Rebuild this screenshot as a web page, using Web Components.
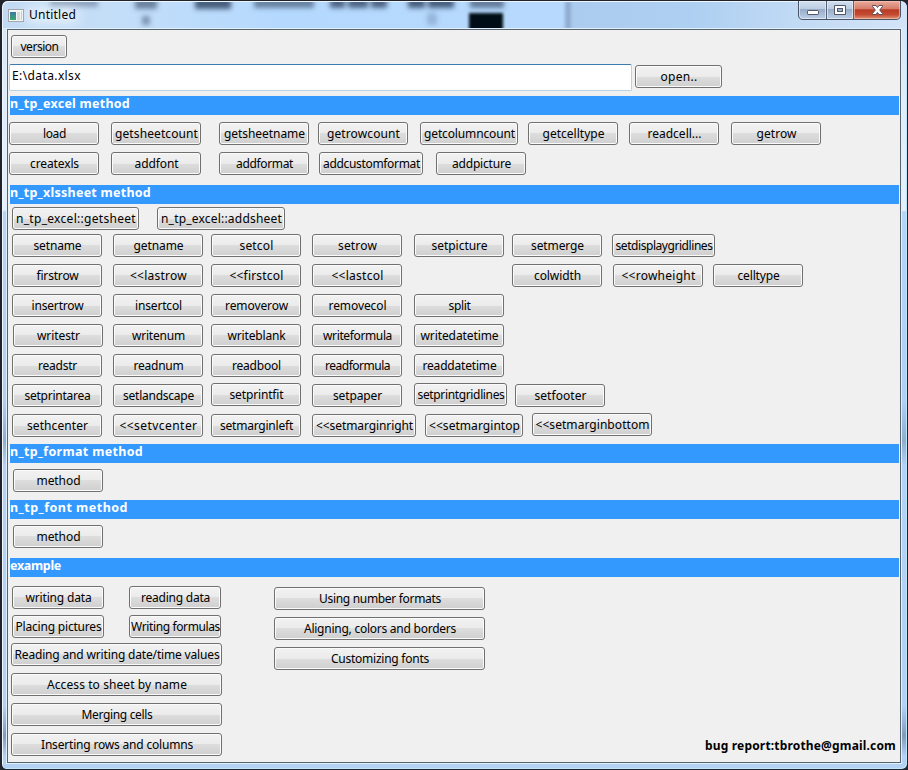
<!DOCTYPE html>
<html lang="en">
<head>
<meta charset="utf-8">
<title>Untitled</title>
<style>
    html, body { margin:0; height:100%; overflow:hidden; background:#23252d; }
    body { font:12px/15px "Noto Sans", "Open Sans", sans-serif; color:#000; }
</style>
</head>
<body>
<app-window>
    <title-bar slot="title" fit="47">Untitled</title-bar>

    <button-row top="5"><tp-button gap="3" w="56" fit="38">version</tp-button></button-row>
    <button-row top="6">
        <path-field fit="69">E:\data.xlsx</path-field>
        <tp-button gap="3" down="1" w="87" fit="37">open..</tp-button>
    </button-row>

    <section-bar top="5" fit="120">n_tp_excel method</section-bar>
    <button-row top="7">
        <tp-button gap="1" fit="23">load</tp-button>
        <tp-button gap="12" fit="83">getsheetcount</tp-button>
        <tp-button gap="18" fit="81">getsheetname</tp-button>
        <tp-button gap="9" fit="73">getrowcount</tp-button>
        <tp-button gap="12" w="98" fit="91">getcolumncount</tp-button>
        <tp-button gap="10" fit="62">getcelltype</tp-button>
        <tp-button gap="11" fit="54">readcell...</tp-button>
        <tp-button gap="12" fit="40">getrow</tp-button>
    </button-row>
    <button-row top="7">
        <tp-button gap="1" fit="49">createxls</tp-button>
        <tp-button gap="12" fit="44">addfont</tp-button>
        <tp-button gap="18" fit="57">addformat</tp-button>
        <tp-button gap="10" w="104" fit="97">addcustomformat</tp-button>
        <tp-button gap="13" fit="59">addpicture</tp-button>
    </button-row>

    <section-bar top="10" fit="141">n_tp_xlssheet method</section-bar>
    <button-row top="3">
        <tp-button gap="4" w="127" fit="120">n_tp_excel::getsheet</tp-button>
        <tp-button gap="18" w="128" fit="121">n_tp_excel::addsheet</tp-button>
    </button-row>
    <button-row top="4">
        <tp-button gap="4" fit="48">setname</tp-button>
        <tp-button gap="11" fit="50">getname</tp-button>
        <tp-button gap="8" fit="34">setcol</tp-button>
        <tp-button gap="11" fit="39">setrow</tp-button>
        <tp-button gap="12" fit="56">setpicture</tp-button>
        <tp-button gap="8" fit="53">setmerge</tp-button>
        <tp-button gap="10" w="103" fit="97">setdisplaygridlines</tp-button>
    </button-row>
    <button-row top="7">
        <tp-button gap="4" fit="42">firstrow</tp-button>
        <tp-button gap="11" fit="57">&lt;&lt;lastrow</tp-button>
        <tp-button gap="8" fit="54">&lt;&lt;firstcol</tp-button>
        <tp-button gap="11" fit="52">&lt;&lt;lastcol</tp-button>
        <tp-button gap="110" fit="47">colwidth</tp-button>
        <tp-button gap="11" fit="74">&lt;&lt;rowheight</tp-button>
        <tp-button gap="10" fit="42">celltype</tp-button>
    </button-row>
    <button-row top="7">
        <tp-button gap="4" fit="52">insertrow</tp-button>
        <tp-button gap="11" fit="47">insertcol</tp-button>
        <tp-button gap="8" fit="63">removerow</tp-button>
        <tp-button gap="11" fit="58">removecol</tp-button>
        <tp-button gap="12" fit="22">split</tp-button>
    </button-row>
    <button-row top="7">
        <tp-button gap="5" fit="43">writestr</tp-button>
        <tp-button gap="10" fit="53">writenum</tp-button>
        <tp-button gap="8" fit="58">writeblank</tp-button>
        <tp-button gap="11" fit="69">writeformula</tp-button>
        <tp-button gap="12" fit="78">writedatetime</tp-button>
    </button-row>
    <button-row top="7">
        <tp-button gap="4" fit="39">readstr</tp-button>
        <tp-button gap="11" fit="50">readnum</tp-button>
        <tp-button gap="8" fit="49">readbool</tp-button>
        <tp-button gap="11" fit="65">readformula</tp-button>
        <tp-button gap="12" fit="74">readdatetime</tp-button>
    </button-row>
    <button-row top="7">
        <tp-button gap="4" fit="66">setprintarea</tp-button>
        <tp-button gap="11" fit="71">setlandscape</tp-button>
        <tp-button gap="8" down="-1" fit="54">setprintfit</tp-button>
        <tp-button gap="11" fit="49">setpaper</tp-button>
        <tp-button gap="12" down="-1" w="93" fit="87">setprintgridlines</tp-button>
        <tp-button gap="8" fit="52">setfooter</tp-button>
    </button-row>
    <button-row top="7">
        <tp-button gap="4" fit="61">sethcenter</tp-button>
        <tp-button gap="11" fit="78">&lt;&lt;setvcenter</tp-button>
        <tp-button gap="8" fit="73">setmarginleft</tp-button>
        <tp-button gap="11" w="104" fit="97">&lt;&lt;setmarginright</tp-button>
        <tp-button gap="9" w="98" fit="91">&lt;&lt;setmargintop</tp-button>
        <tp-button gap="9" down="-1" w="120" fit="114">&lt;&lt;setmarginbottom</tp-button>
    </button-row>

    <section-bar top="7" fit="133">n_tp_format method</section-bar>
    <button-row top="6"><tp-button gap="5" fit="44">method</tp-button></button-row>

    <section-bar top="8" fit="118">n_tp_font method</section-bar>
    <button-row top="6"><tp-button gap="5" fit="44">method</tp-button></button-row>

    <section-bar top="10" fit="51">example</section-bar>
    <example-panel>
        <button-row>
            <tp-button gap="4" w="92" fit="66">writing data</tp-button>
            <tp-button gap="25" w="92" fit="69">reading data</tp-button>
        </button-row>
        <button-row top="6">
            <tp-button gap="4" w="92" fit="86">Placing pictures</tp-button>
            <tp-button gap="25" w="92" fit="89">Writing formulas</tp-button>
        </button-row>
        <button-row top="5"><tp-button gap="3" w="211" fit="205">Reading and writing date/time values</tp-button></button-row>
        <button-row top="7"><tp-button gap="3" w="211" fit="140">Access to sheet by name</tp-button></button-row>
        <button-row top="7"><tp-button gap="3" w="211" fit="71">Merging cells</tp-button></button-row>
        <button-row top="7"><tp-button gap="3" w="211" fit="152">Inserting rows and columns</tp-button></button-row>

        <button-row slot="right" top="1"><tp-button w="211" fit="122">Using number formats</tp-button></button-row>
        <button-row slot="right" top="7"><tp-button w="211" fit="152">Aligning, colors and borders</tp-button></button-row>
        <button-row slot="right" top="7"><tp-button w="211" fit="98">Customizing fonts</tp-button></button-row>

        <bug-report slot="note" fit="191">bug report:tbrothe@gmail.com</bug-report>
    </example-panel>
</app-window>

<script>
// shared base: clones the template and spreads the label to its "fit" width
class BaseElement extends HTMLElement {
    constructor(html){
        super();
        this.attachShadow({mode:"open"});
        var t = document.createElement("template");
        t.innerHTML = html;
        this.shadowRoot.appendChild(t.content.cloneNode(true));
    }
    connectedCallback(){
        ["top", "gap", "w", "down"].forEach(name => {
            if (this.hasAttribute(name)) this.style.setProperty("--" + name, this.getAttribute(name) + "px");
        });
        var label = this.shadowRoot.querySelector("#label");
        if (label && this.hasAttribute("fit")) {
            var n = this.textContent.trim().length;
            var width = label.getBoundingClientRect().width;
            label.style.letterSpacing = ((this.getAttribute("fit") - width) / n) + "px";
        }
    }
}

class AppWindow extends BaseElement {
    constructor(){
        super(`
        <style>
            :host {
                display:flex;
                flex-direction:column;
                box-sizing:border-box;
                width:908px;
                height:770px;
                border:1px solid #20232c;
                border-left-width:2px;
                border-radius:7px 7px 6px 6px;
                box-shadow:inset 1px 1px #eef6ff, inset -1px -1px #bfe6fa;
                padding:0 6px 6px 5px;
                background:
                    linear-gradient(#d5e5f7 0, #dfebf8 90px, #e6f0fa 209px, #b5d5f7 211px, #aed0f4 400px, #8faecd 440px, #b2d3f6 465px, #b2d1f3 705px, #7e9bbb 735px, #b3d1f3 755px);
            }
            #client {
                flex:1;
                display:flex;
                flex-direction:column;
                border:1px solid #56646f;
                box-shadow:0 0 0 1px #e2f0fd;
                background:#f0f0f0;
            }
        </style>
        <slot name="title"></slot>
        <div id="client"><slot></slot></div>`);
    }
}

class TitleBar extends BaseElement {
    constructor(){
        super(`
        <style>
            :host {
                position:relative;
                display:flex;
                flex:none;
                height:28px;
                margin:0 -4px 0 -4px;
                font-size:12px;
            }
            #glass { position:absolute; left:0; top:1px; width:904px; height:26px; border-radius:6px 6px 0 0; }
            #icon { position:relative; margin:8px 0 0 5px; width:16px; height:13px; flex:none; }
            #text { position:relative; margin:6px auto 0 5px; }
            #label { display:inline-block; white-space:nowrap; }
            #controls { position:relative; width:105px; height:20px; flex:none; margin:-1px 3px 0 0; }
        </style>
        <svg id="glass" viewBox="3 2 904 26" preserveAspectRatio="none">
            <defs>
                <linearGradient id="sky"><stop offset="0" stop-color="#c2daf3"/><stop offset=".12" stop-color="#c4def8"/><stop offset=".3" stop-color="#b5d9fe"/><stop offset=".618" stop-color="#b6d9fd"/><stop offset=".63" stop-color="#acccef"/><stop offset=".76" stop-color="#adcff1"/><stop offset=".9" stop-color="#c5dcf5"/><stop offset="1" stop-color="#d3e4f7"/></linearGradient>
                <filter id="soft" filterUnits="userSpaceOnUse" x="0" y="-20" width="910" height="70"><feGaussianBlur stdDeviation="2.8"/></filter>
                <filter id="edge" filterUnits="userSpaceOnUse" x="0" y="-20" width="910" height="70"><feGaussianBlur stdDeviation="1.4"/></filter>
                <filter id="glow" filterUnits="userSpaceOnUse" x="0" y="-20" width="910" height="70"><feGaussianBlur stdDeviation="7"/></filter>
            </defs>
            <rect x="3" y="2" width="904" height="26" fill="url(#sky)"/>
            <g filter="url(#soft)" fill="#344966">
                <rect x="50" y="-2" width="48" height="9" opacity=".4"/>
                <rect x="135" y="-2" width="22" height="11" opacity=".6"/>
                <rect x="142" y="16" width="8" height="9" opacity=".5"/>
                <rect x="195" y="-2" width="36" height="11" opacity=".85"/>
                <path d="M254 -2h60v10h-60z" opacity=".6"/>
                <path d="M330 -2h15v10h-15zM348 -2h20v10h-20zM371 -2h16v10h-16z" opacity=".8"/>
                <path d="M408 -2h17v10h-17zM428 -2h26v10h-26z" opacity=".85"/>
                <rect x="470" y="-2" width="34" height="10" opacity=".65"/>
                <rect x="427" y="13" width="10" height="12" opacity=".25"/>
            </g>
            <rect x="565" y="1" width="6" height="28" fill="#344966" opacity=".25" filter="url(#edge)"/>
            <rect x="469" y="13" width="34" height="20" fill="#050b16" filter="url(#edge)"/>
            <rect x="26" y="8" width="52" height="14" fill="#fff" opacity=".7" filter="url(#glow)"/>
        </svg>
        <svg id="icon" viewBox="0 0 16 13">
            <defs><linearGradient id="pic" x2="0" y2="1"><stop stop-color="#3c77a5"/><stop offset="1" stop-color="#3ca76b"/></linearGradient></defs>
            <rect x=".5" y=".5" width="15" height="12" fill="#f4f5f5" stroke="#a3a7aa"/>
            <rect x="2" y="3" width="6" height="8" fill="url(#pic)"/>
            <rect x="9" y="3" width="3" height="8" fill="#d4dadd"/>
            <rect x="13" y="2" width="1" height="9" fill="#c6ccd0"/>
        </svg>
        <div id="text"><span id="label"><slot></slot></span></div>
        <svg id="controls" viewBox="0 0 105 20">
            <defs>
                <linearGradient id="g" x2="0" y2="1"><stop stop-color="#d5e2f0"/><stop offset=".45" stop-color="#bccde2"/><stop offset=".48" stop-color="#97acc8"/><stop offset="1" stop-color="#bdd0e7"/></linearGradient>
                <linearGradient id="r" x2="0" y2="1"><stop stop-color="#e8ab9c"/><stop offset=".45" stop-color="#d67c69"/><stop offset=".48" stop-color="#ba3b25"/><stop offset=".75" stop-color="#c34a30"/><stop offset="1" stop-color="#e19374"/></linearGradient>
            </defs>
            <path d="M1.500 0V15Q1.500 19.500 6 19.500H99Q103.500 19.500 103.500 15V0" fill="url(#g)" stroke="#4b5467"/>
            <path d="M57 1H103V15Q103 19 99 19H57z" fill="url(#r)"/>
            <path d="M2.500 1V15Q2.500 18.500 6 18.500H28.500V1.500H2.500M30.500 1.500H55.500V18.500H30.500z" fill="none" stroke="#eaf3fc" opacity=".65"/>
            <path d="M57.500 1.500H102.500V15Q102.500 18.500 99 18.500H57.500z" fill="none" stroke="#ffc9b7" opacity=".6"/>
            <path d="M29.500 1V19M56.500 1V19" stroke="#565f73"/>
            <path d="M1 .5H104" stroke="#20232c"/>
            <rect x="10.500" y="10.500" width="11" height="4" rx=".7" fill="#fff" stroke="#525766"/>
            <path d="M37.500 5.500H48.500V14.500H37.500z" fill="#fff" stroke="#525766"/>
            <rect x="40.500" y="8.500" width="5" height="3" fill="#9bb3cf" stroke="#525766"/>
            <path d="M75.500 5.500H79L80.500 7.500L82 5.500H85.500V6.500L82.700 10L85.500 13.500V14.500H82L80.500 12.500L79 14.500H75.500V13.500L78.300 10L75.500 6.500z" fill="#fff" stroke="#5a4e5b"/>
        </svg>`);
    }
}

class SectionBar extends BaseElement {
    constructor(){
        super(`
        <style>
            :host {
                display:block;
                flex:none;
                height:19px;
                margin:var(--top, 0) 1px 0 2px;
                background:#3399ff;
                color:#fff;
                font-size:12.5px;
                font-weight:bold;
            }
            #label { display:inline-block; white-space:nowrap; }
        </style>
        <span id="label"><slot></slot></span>`);
    }
}

class ButtonRow extends BaseElement {
    constructor(){
        super(`
        <style>
            :host { display:flex; flex:none; align-items:flex-start; margin-top:var(--top, 0); }
        </style>
        <slot></slot>`);
    }
}

class PathField extends BaseElement {
    constructor(){
        super(`
        <style>
            :host {
                box-sizing:border-box;
                width:623px;
                height:27px;
                margin-left:1px;
                padding:3px 2px;
                background:#fff;
                border:1px solid #b5d3e7;
                border-top-color:#3d7bad;
                border-radius:2px;
            }
            #label { display:inline-block; white-space:nowrap; }
        </style>
        <span id="label"><slot></slot></span>`);
    }
}

class TpButton extends BaseElement {
    constructor(){
        super(`
        <style>
            :host {
                display:block;
                flex:none;
                width:var(--w, 90px);
                height:23px;
                margin:var(--down, 0) 0 calc(0px - var(--down, 0px)) var(--gap, 0);
            }
            button {
                display:flex;
                justify-content:center;
                align-items:center;
                box-sizing:border-box;
                width:100%;
                height:100%;
                padding:0 0 0 1px;
                font:inherit;
                color:inherit;
                border:1px solid #707070;
                border-radius:3px;
                box-shadow:inset 0 0 0 1px #fbfbfb;
                background:linear-gradient(#f2f2f2, #ebebeb 50%, #dddddd 50%, #cfcfcf);
            }
            #label { flex:none; white-space:nowrap; }
        </style>
        <button><span id="label"><slot></slot></span></button>`);
    }
}

class ExamplePanel extends BaseElement {
    constructor(){
        super(`
        <style>
            :host { display:flex; margin-top:9px; }
            #left { width:266px; }
            #note { margin-left:auto; align-self:flex-end; padding:0 4px 3px 0; }
        </style>
        <div id="left"><slot></slot></div>
        <div><slot name="right"></slot></div>
        <div id="note"><slot name="note"></slot></div>`);
    }
}

class BugReport extends BaseElement {
    constructor(){
        super(`
        <style>
            :host { display:block; font-weight:bold; }
            #label { display:inline-block; white-space:nowrap; }
        </style>
        <span id="label"><slot></slot></span>`);
    }
}

customElements.define("app-window", AppWindow);
customElements.define("title-bar", TitleBar);
customElements.define("section-bar", SectionBar);
customElements.define("button-row", ButtonRow);
customElements.define("path-field", PathField);
customElements.define("tp-button", TpButton);
customElements.define("example-panel", ExamplePanel);
customElements.define("bug-report", BugReport);
</script>
</body>
</html>
